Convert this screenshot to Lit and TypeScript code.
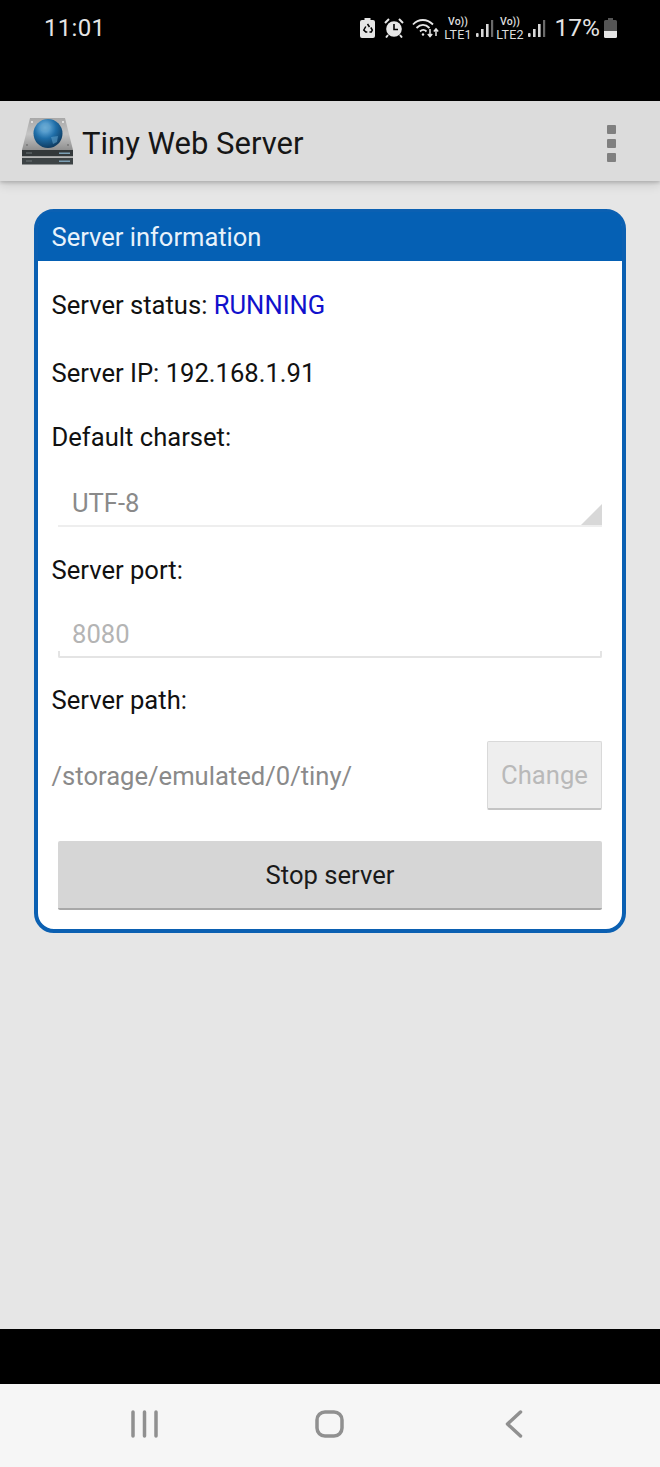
import { LitElement, html, css, svg } from 'lit'
import { customElement } from 'lit/decorators.js'

const signal = svg`
  <rect x="0" y="14" width="2.600" height="4" rx="1" fill="#d8d8d8" />
  <rect x="5" y="10" width="2.600" height="8" fill="#d8d8d8" />
  <rect x="10" y="5" width="2.600" height="13" fill="#d8d8d8" />
  <rect x="15" y="1" width="2.200" height="17" fill="#6a6a6a" />
`

@customElement('app-root')
export class AppRoot extends LitElement {
  static styles = css`
    :host {
      display: block;
      width: 660px;
      height: 1467px;
      font-family: Roboto, 'Liberation Sans', sans-serif;
      color: #111;
      background: #e6e6e6;
      overflow: hidden;
    }

    .page {
      display: flex;
      flex-direction: column;
      height: 1467px;
    }

    .status-bar {
      height: 101px;
      flex: none;
      background: #000;
      color: #e4e4e4;
      box-sizing: border-box;
      padding: 13px 43px 0 44px;
      display: flex;
      justify-content: space-between;
      align-items: flex-start;
    }

    .clock {
      font-size: 24px;
      line-height: 30px;
      letter-spacing: 0.3px;
    }

    .status-icons {
      display: flex;
      align-items: center;
      height: 30px;
    }

    .status-icons svg {
      display: block;
      flex: none;
    }

    .recycle {
      margin-right: 9px;
    }

    .alarm {
      margin-right: 8px;
    }

    .wifi {
      margin-right: 6px;
    }

    .volte {
      display: flex;
      flex-direction: column;
      align-items: center;
      color: #ddd;
      width: 27px;
      margin-right: 4px;
    }

    .volte .vo {
      font-size: 10.500px;
      line-height: 12px;
      font-weight: 500;
    }

    .volte .lte {
      font-size: 12.500px;
      line-height: 13px;
      letter-spacing: 0.2px;
    }

    .signal {
      margin-right: 3px;
    }

    .signal.last {
      margin-right: 9px;
    }

    .battery-text {
      font-size: 24.500px;
      line-height: 30px;
      margin-right: 4px;
    }

    .toolbar {
      height: 80px;
      flex: none;
      box-sizing: border-box;
      background: #dcdcdc;
      box-shadow: 0 2px 3px rgba(0, 0, 0, 0.15), 0 4px 10px rgba(0, 0, 0, 0.12);
      padding: 0 44px 0 21px;
      display: flex;
      align-items: center;
      position: relative;
      margin-bottom: 28px;
    }

    .logo {
      margin-right: 8px;
      flex: none;
    }

    .title {
      font-size: 31px;
      flex: 1;
      color: #161616;
      padding-top: 5px;
    }

    .more {
      display: flex;
      flex-direction: column;
      gap: 5px;
      margin-top: 4px;
    }

    .more span {
      width: 9px;
      height: 9px;
      border-radius: 1px;
      background: #808080;
    }

    .card {
      margin: 0 34px;
      height: 724px;
      flex: none;
      box-sizing: border-box;
      background: #fff;
      border: 4px solid #0b60b2;
      border-radius: 20px;
      display: flex;
      flex-direction: column;
    }

    .card-head {
      background: #0560b4;
      color: #e8f2fb;
      height: 49px;
      margin: -1px 0 0;
      padding: 0 0 0 13.500px;
      font-size: 25.500px;
      line-height: 50px;
      flex: none;
      border-radius: 14px 14px 0 0;
    }

    .card-body {
      padding: 0 20px 0 13.500px;
      font-size: 25.600px;
      line-height: 30px;
      display: flex;
      flex-direction: column;
    }

    .running {
      color: #1111cc;
    }

    .status-row {
      margin-top: 29px;
    }

    .ip-row {
      margin-top: 38px;
    }

    .charset-label {
      margin-top: 34px;
    }

    .select {
      margin: 20px 0 0 6.500px;
      height: 55px;
      box-sizing: border-box;
      border-bottom: 2px solid #eeeeee;
      padding: 16px 0 0 14px;
      color: #8a8a8a;
      position: relative;
    }

    .select .arrow {
      position: absolute;
      right: 0;
      bottom: 0;
      width: 0;
      height: 0;
      border-style: solid;
      border-width: 0 0 21px 21px;
      border-color: transparent transparent #d8d8d8 transparent;
    }

    .port-label {
      margin-top: 28px;
    }

    .input {
      margin: 20px 0 0 6.500px;
      height: 53px;
      box-sizing: border-box;
      border: 2px solid #e4e4e4;
      border-top: 0;
      border-radius: 0 0 2px 2px;
      padding: 14px 0 0 12px;
      color: #b4b4b4;
      position: relative;
    }

    .input::before,
    .input::after {
      content: '';
      position: absolute;
      top: 0;
      bottom: 5px;
      width: 2px;
      background: #fff;
    }

    .input::before {
      left: -2px;
    }

    .input::after {
      right: -2px;
    }

    .path-label {
      margin-top: 27px;
    }

    .path-row {
      margin-top: 26px;
      display: flex;
      justify-content: space-between;
      align-items: center;
      color: #8a8a8a;
    }

    .change {
      width: 115px;
      height: 69px;
      box-sizing: border-box;
      background: #eeeeee;
      border: 1px solid #d9d9d9;
      border-bottom: 2px solid #c4c4c4;
      border-radius: 2px;
      color: #b9b9b9;
      display: flex;
      align-items: center;
      justify-content: center;
    }

    .stop {
      margin: 31px 0 0 6.500px;
      height: 69px;
      background: #d6d6d6;
      border-bottom: 2px solid #a8a8a8;
      box-sizing: border-box;
      border-radius: 2px;
      color: #1a1a1a;
      display: flex;
      align-items: center;
      justify-content: center;
    }

    .spacer {
      flex: 1;
    }

    .black-band {
      height: 55px;
      flex: none;
      background: #000;
    }

    .nav-bar {
      height: 83px;
      flex: none;
      background: #f6f6f6;
      box-sizing: border-box;
      padding: 0 137px 3px 131px;
      display: flex;
      align-items: center;
      justify-content: space-between;
    }

    .nav-bar svg {
      display: block;
    }

    .nav-bar .home {
      margin-right: 5px;
    }
  `

  private renderVolte(line: string, last = false) {
    return html`
      <div class="volte">
        <span class="vo">Vo))</span>
        <span class="lte">${line}</span>
      </div>
      <svg class="signal ${last ? 'last' : ''}" width="18" height="18" viewBox="0 0 18 18">${signal}</svg>
    `
  }

  private renderStatusIcons() {
    return html`
      <div class="status-icons">
        <svg class="recycle" width="15" height="20" viewBox="0 0 15 20">
          <path d="M4.500 0h6v2H13a2 2 0 0 1 2 2v14a2 2 0 0 1-2 2H2a2 2 0 0 1-2-2V4a2 2 0 0 1 2-2h2.500z" fill="#e6e6e6" />
          <path d="M7.500 6l2 3M5.800 8.500l-2 3.500 2 2h1.500M9.500 14h1.800l1-2-1.500-2.500" fill="none" stroke="#000" stroke-width="1.500" />
        </svg>
        <svg class="alarm" width="20" height="20" viewBox="0 0 20 20">
          <circle cx="10" cy="11" r="7.800" fill="#e6e6e6" />
          <path d="M10 6v5.500h4" fill="none" stroke="#000" stroke-width="1.600" />
          <path d="M1 5l4-4M19 5l-4-4M4 17l-2 2.500M16 17l2 2.500" stroke="#e6e6e6" stroke-width="2" fill="none" />
        </svg>
        <svg class="wifi" width="27" height="20" viewBox="0 0 27 20" fill="none" stroke="#e6e6e6">
          <path d="M1 6.500C6.500 .5 15 .5 21 6.500" stroke-width="1.800" />
          <path d="M4.500 10c4-4 9-4 13 0" stroke-width="1.800" />
          <path d="M8 13.500c2-2 4.500-2 6.500 0" stroke-width="1.800" />
          <circle cx="11" cy="16.500" r="1.200" fill="#e6e6e6" stroke="none" />
          <path d="M18 11v7M15.800 16l2.200 2.500 2.200-2.500M24 18v-7M21.800 13.500l2.200-2.500 2.200 2.500" stroke-width="1.500" />
        </svg>
        ${this.renderVolte('LTE1')}
        ${this.renderVolte('LTE2', true)}
        <span class="battery-text">17%</span>
        <svg width="13" height="20" viewBox="0 0 13 20">
          <path d="M4 0h5v2h2.500A1.500 1.500 0 0 1 13 3.500V13H0V3.500A1.500 1.500 0 0 1 1.500 2H4z" fill="#555" />
          <path d="M0 13h13v5.500a1.500 1.500 0 0 1-1.500 1.500h-10A1.500 1.500 0 0 1 0 18.500z" fill="#e6e6e6" />
        </svg>
      </div>
    `
  }

  private renderLogo() {
    return html`
      <svg class="logo" width="53" height="48" viewBox="0 0 53 48">
        <defs>
          <radialGradient id="globe" cx="0.4" cy="0.3" r="0.75">
            <stop offset="0" stop-color="#7fc0ea" />
            <stop offset="0.5" stop-color="#1f6ea8" />
            <stop offset="1" stop-color="#0c3558" />
          </radialGradient>
          <linearGradient id="plate" x1="0" y1="0" x2="0" y2="1">
            <stop offset="0" stop-color="#a8a8a8" />
            <stop offset="0.5" stop-color="#c4c4c4" />
            <stop offset="1" stop-color="#8f8f8f" />
          </linearGradient>
        </defs>
        <path d="M9 1h35l8 32H1z" fill="url(#plate)" />
        <circle cx="11" cy="5" r="1" fill="#eee" />
        <circle cx="42" cy="5" r="1" fill="#eee" />
        <circle cx="6" cy="28" r="1" fill="#777" />
        <circle cx="47" cy="28" r="1" fill="#777" />
        <rect x="1" y="33" width="51" height="6.500" fill="#33383a" />
        <rect x="1" y="41" width="51" height="6.500" fill="#3d4345" />
        <rect x="1" y="39.500" width="51" height="1.500" fill="#b5b5b5" />
        <rect x="38" y="35.500" width="11" height="1.500" fill="#7da0b5" />
        <rect x="38" y="43.500" width="11" height="1.500" fill="#7da0b5" />
        <rect x="5" y="35.500" width="6" height="1" fill="#6f7678" />
        <rect x="5" y="43.500" width="6" height="1" fill="#6f7678" />
        <circle cx="27" cy="16.500" r="14.500" fill="url(#globe)" />
        <path d="M20 8l7-2 3 4-4 5-6-1zM30 20l7-1-1 6-4 2z" fill="#5d9fc8" opacity="0.6" />
      </svg>
    `
  }

  render() {
    return html`
      <div class="page">
        <div class="status-bar">
          <span class="clock">11:01</span>
          ${this.renderStatusIcons()}
        </div>

        <div class="toolbar">
          ${this.renderLogo()}
          <span class="title">Tiny Web Server</span>
          <div class="more"><span></span><span></span><span></span></div>
        </div>

        <div class="card">
          <div class="card-head">Server information</div>
          <div class="card-body">
            <div class="status-row">Server status: <span class="running">RUNNING</span></div>
            <div class="ip-row">Server IP: 192.168.1.91</div>
            <div class="charset-label">Default charset:</div>
            <div class="select">UTF-8<span class="arrow"></span></div>
            <div class="port-label">Server port:</div>
            <div class="input">8080</div>
            <div class="path-label">Server path:</div>
            <div class="path-row">
              <span>/storage/emulated/0/tiny/</span>
              <div class="change">Change</div>
            </div>
            <div class="stop">Stop server</div>
          </div>
        </div>

        <div class="spacer"></div>
        <div class="black-band"></div>

        <div class="nav-bar">
          <svg width="27" height="28" viewBox="0 0 27 28" stroke="#909090" stroke-width="3.500" stroke-linecap="round">
            <path d="M2 2v24M13.500 2v24M25 2v24" />
          </svg>
          <svg class="home" width="29" height="28" viewBox="0 0 29 28">
            <rect x="2" y="2" width="25" height="24" rx="8" fill="none" stroke="#909090" stroke-width="3.500" />
          </svg>
          <svg width="18" height="28" viewBox="0 0 18 28" fill="none" stroke="#909090" stroke-width="3.500" stroke-linecap="round" stroke-linejoin="round">
            <path d="M15.500 2L2.500 14l13 12" />
          </svg>
        </div>
      </div>
    `
  }
}
